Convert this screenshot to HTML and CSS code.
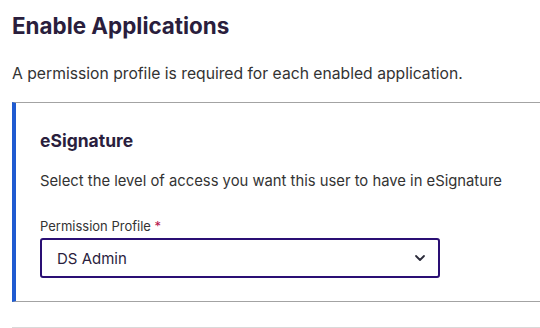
FILE: index.html
```html
<!DOCTYPE html>
<html lang="en">
<head>
    <meta charset="UTF-8">
    <title>Enable Applications</title>
    <link rel="stylesheet" href="styles.css">
</head>
<body>
    <h1>Enable Applications</h1>
    <p class="intro">A permission profile is required for each enabled application.</p>

    <div class="app-card">
        <h2>eSignature</h2>
        <p class="desc">Select the level of access you want this user to have in eSignature</p>

        <label for="profile">Permission Profile <span class="req">*</span></label>
        <div class="select-wrap">
            <select id="profile">
                <option>DS Admin</option>
            </select>
            <svg class="chevron" width="12" height="8" viewBox="0 0 12 8">
                <path d="M2 2l4 4 4-4" fill="none" stroke="#2b2b3a" stroke-width="1.8" stroke-linecap="round" stroke-linejoin="round"/>
            </svg>
        </div>
    </div>

    <div class="next-card"></div>
</body>
</html>
```

FILE: styles.css
```css
body {
    margin: 0;
    padding: 0 0 0 12px;
    font-family: Inter, "Noto Sans", sans-serif;
    color: #1e1e1e;
    background: #fff;
}
h1 {
    margin: 0;
    padding-top: 12px;
    font-size: 22.4px;
    line-height: 28px;
    font-weight: bold;
    color: #2a1e3d;
}
.intro {
    margin: 24px 0 0;
    font-size: 15.7px;
    line-height: 20px;
    color: #333;
}
.app-card {
    margin-top: 18px;
    border-top: 1px solid #a3a3a3;
    border-bottom: 1px solid #a3a3a3;
    border-left: 4px solid #1f5bd1;
    padding: 26px 0 23px 24px;
}
.next-card {
    margin-top: 25px;
    border-top: 1px solid #d9d9d9;
}
.app-card h2 {
    margin: 0;
    font-size: 17.5px;
    line-height: 24px;
    font-weight: bold;
    color: #2a1e3d;
}
.desc {
    margin: 18px 0 0;
    font-size: 14.8px;
    line-height: 20px;
    color: #333;
}
label {
    display: block;
    margin-top: 27px;
    font-size: 13px;
    line-height: 16px;
    color: #333;
}
.req {
    color: #b5124b;
}
.select-wrap {
    position: relative;
    width: 400px;
    margin-top: 4px;
}
select {
    display: block;
    appearance: none;
    width: 100%;
    height: 40px;
    padding: 0 15px;
    border: 2px solid #2a0f74;
    border-radius: 3px;
    background: #fff;
    font-family: inherit;
    font-size: 15px;
    color: #2a1e3d;
}
.chevron {
    position: absolute;
    right: 14px;
    top: 16px;
}
```
